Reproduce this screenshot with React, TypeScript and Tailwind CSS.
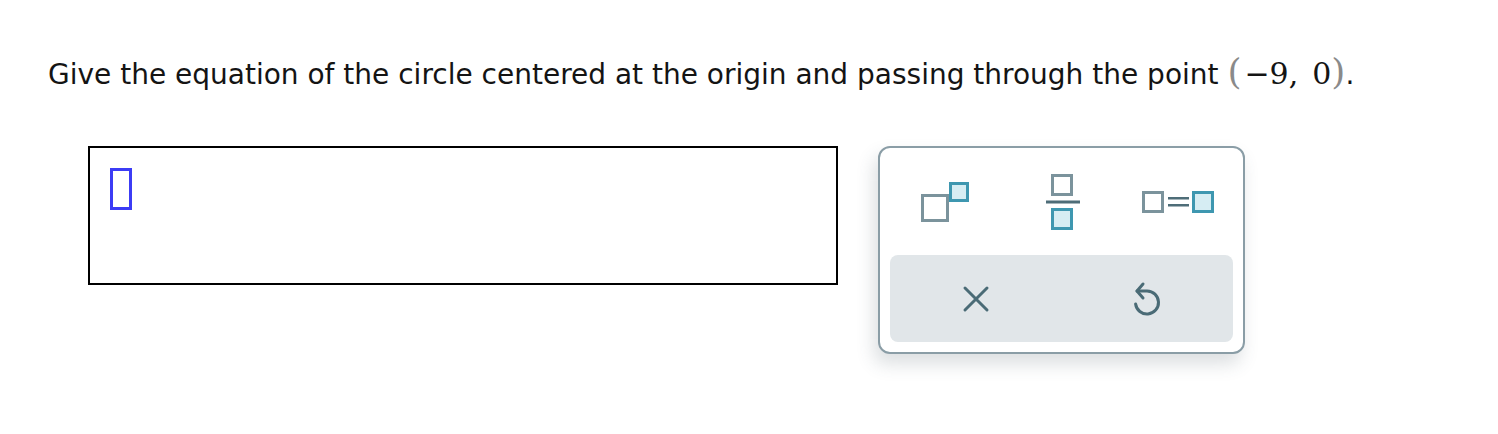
import React from "react";

function SuperscriptIcon() {
  return (
    <svg width="56" height="44" viewBox="0 0 56 44">
      <rect x="3.5" y="17.5" width="25" height="25" fill="white" stroke="#7b939c" strokeWidth="3" />
      <rect x="31.5" y="5.5" width="17" height="17" fill="#d6edf3" stroke="#3e97b0" strokeWidth="3" />
    </svg>
  );
}

function FractionIcon() {
  return (
    <svg width="40" height="60" viewBox="0 0 40 60">
      <rect x="8.5" y="3.5" width="19" height="19" fill="white" stroke="#7b939c" strokeWidth="3" />
      <rect x="2" y="28.5" width="34" height="3" fill="#4e6d78" />
      <rect x="8.5" y="37.5" width="19" height="19" fill="#d6edf3" stroke="#3e97b0" strokeWidth="3" />
    </svg>
  );
}

function EqualsIcon() {
  return (
    <svg width="76" height="28" viewBox="0 0 76 28">
      <rect x="2.5" y="3.5" width="19" height="19" fill="white" stroke="#7b939c" strokeWidth="3" />
      <rect x="27" y="8" width="21" height="2.5" fill="#4e6d78" />
      <rect x="27" y="15" width="21" height="2.5" fill="#4e6d78" />
      <rect x="52.5" y="3.5" width="19" height="19" fill="#d6edf3" stroke="#3e97b0" strokeWidth="3" />
    </svg>
  );
}

function XIcon() {
  return (
    <svg width="28" height="28" viewBox="0 0 28 28">
      <path d="M3 3 L25 25 M25 3 L3 25" stroke="#4a6b76" strokeWidth="3" strokeLinecap="round" fill="none" />
    </svg>
  );
}

function ResetIcon() {
  return (
    <svg width="30" height="38" viewBox="0 0 30 38">
      <path d="M5 11 H15 A11.5 11.5 0 1 1 3.6 24" stroke="#4a6b76" strokeWidth="3" strokeLinecap="round" fill="none" />
      <path d="M11 4 L5 11 L11 18" stroke="#4a6b76" strokeWidth="3" strokeLinecap="round" strokeLinejoin="round" fill="none" />
    </svg>
  );
}

export default function App() {
  return (
    <div className="w-[1498px] h-[434px] bg-white pl-[48px] pt-[52px]" style={{ fontFamily: "'DejaVu Sans', Verdana, sans-serif" }}>
      <p className="text-[28px] leading-[40px] text-[#141414] whitespace-nowrap">
        Give the equation of the circle centered at the origin and passing through the point{" "}
        <span className="text-[30px]" style={{ fontFamily: "'DejaVu Serif', 'Liberation Serif', serif" }}>
          <span className="text-[#8a8a8a] text-[36px] font-light">(</span>
          <span className="ml-[3px]">−9,</span>
          <span className="ml-[14px]">0</span>
          <span className="text-[#8a8a8a] text-[36px] font-light">)</span>
        </span>
        .
      </p>
      <div className="flex items-start gap-[40px] ml-[40px] mt-[51px]">
        <div className="w-[750px] h-[139px] border-2 border-black pl-[20px] pt-[20px]">
          <div className="w-[22px] h-[42px] border-[3px] border-[#3c3cf5]" />
        </div>
        <div className="w-[367px] h-[208px] border-2 border-[#8a9da6] rounded-[12px] bg-white shadow-[-4px_10px_18px_rgba(60,80,90,0.18)] flex flex-col px-[10px] pb-[10px]">
          <div className="flex-1 grid grid-cols-3 items-center">
            <div className="flex justify-center pb-[4px]"><SuperscriptIcon /></div>
            <div className="flex justify-center pl-[6px]"><FractionIcon /></div>
            <div className="flex justify-center pt-[2px] pl-[6px]"><EqualsIcon /></div>
          </div>
          <div className="h-[87px] bg-[#e1e6e9] rounded-[8px] grid grid-cols-2 items-center">
            <div className="flex justify-center"><XIcon /></div>
            <div className="flex justify-center"><ResetIcon /></div>
          </div>
        </div>
      </div>
    </div>
  );
}
